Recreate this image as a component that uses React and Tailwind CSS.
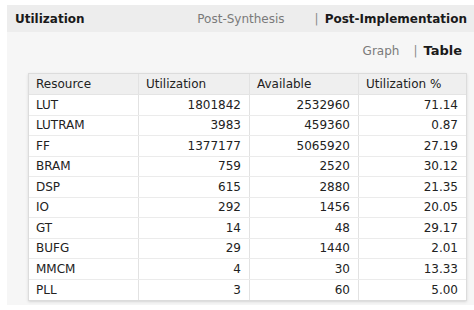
const rows = [
  ["LUT", "1801842", "2532960", "71.14"],
  ["LUTRAM", "3983", "459360", "0.87"],
  ["FF", "1377177", "5065920", "27.19"],
  ["BRAM", "759", "2520", "30.12"],
  ["DSP", "615", "2880", "21.35"],
  ["IO", "292", "1456", "20.05"],
  ["GT", "14", "48", "29.17"],
  ["BUFG", "29", "1440", "2.01"],
  ["MMCM", "4", "30", "13.33"],
  ["PLL", "3", "60", "5.00"],
]

export default function App() {
  return (
    <div className="w-[474px] h-[310px] bg-white pl-[7px] pt-[5px] pb-[5px] overflow-hidden font-['DejaVu_Sans',sans-serif] text-[12px] text-[#222]">
      <div className="h-full flex flex-col bg-[#f6f6f6]">
        {/* Header */}
        <div className="h-[27px] shrink-0 flex items-center bg-[#ededed] pl-[8px] pr-[7px]">
          <span className="font-bold text-[#1a1a1a]">Utilization</span>
          <span className="ml-auto text-[#7a7a7a]">Post-Synthesis</span>
          <span className="ml-[30px] text-[#8a8a8a]">|</span>
          <span className="ml-[6px] font-bold text-[#1a1a1a]">Post-Implementation</span>
        </div>

        {/* View toggle */}
        <div className="h-[41px] shrink-0 flex items-center justify-end pr-[12px] pb-[4px]">
          <span className="text-[#7a7a7a]">Graph</span>
          <span className="ml-[14px] text-[#8a8a8a]">|</span>
          <span className="ml-[6px] font-bold text-[13px] text-[#1a1a1a]">Table</span>
        </div>

        {/* Table */}
        <div className="ml-[21px] w-[439px] bg-white border border-[#dcdcdc] shadow-sm">
          <div className="grid grid-cols-[110px_111px_109px_1fr] h-[21px] bg-[#efefef] border-b border-[#e4e4e4] items-center">
            <div className="pl-[7px] h-full flex items-center border-r border-[#e2e2e2]">Resource</div>
            <div className="pl-[7px] h-full flex items-center border-r border-[#e2e2e2]">Utilization</div>
            <div className="pl-[7px] h-full flex items-center border-r border-[#e2e2e2]">Available</div>
            <div className="pl-[7px] h-full flex items-center">Utilization %</div>
          </div>
          {rows.map((r, i) => (
            <div
              key={r[0]}
              className={
                "grid grid-cols-[110px_111px_109px_1fr] h-[20.5px] " +
                (i < rows.length - 1 ? "border-b border-[#ebebeb]" : "")
              }
            >
              <div className="pl-[7px] h-full flex items-center border-r border-[#e2e2e2]">{r[0]}</div>
              <div className="pr-[8px] h-full flex items-center justify-end border-r border-[#e2e2e2]">{r[1]}</div>
              <div className="pr-[8px] h-full flex items-center justify-end border-r border-[#e2e2e2]">{r[2]}</div>
              <div className="pr-[8px] h-full flex items-center justify-end">{r[3]}</div>
            </div>
          ))}
        </div>
      </div>
    </div>
  )
}
